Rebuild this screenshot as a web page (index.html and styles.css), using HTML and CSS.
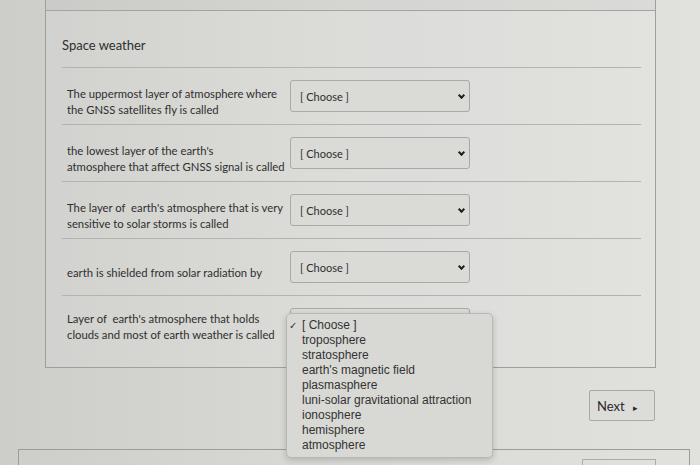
FILE: index.html
```html
<!DOCTYPE html>
<html lang="en">
<head>
  <meta charset="UTF-8" />
  <title>Quiz</title>
  <link rel="stylesheet" href="styles.css">
</head>
<body>
  <div class="page">
    <div class="card">
      <div class="card-top"></div>
      <div class="card-body">
        <div class="title">Space weather</div>

        <div class="row">
          <div class="question">The uppermost layer of atmosphere where<br>the GNSS satellites fly is called</div>
          <div class="select"><span>[ Choose ]</span><span class="chev"></span></div>
        </div>
        <div class="row">
          <div class="question">the lowest layer of the earth's<br>atmosphere that affect GNSS signal is called</div>
          <div class="select"><span>[ Choose ]</span><span class="chev"></span></div>
        </div>
        <div class="row">
          <div class="question">The layer of &nbsp;earth's atmosphere that is very<br>sensitive to solar storms is called</div>
          <div class="select"><span>[ Choose ]</span><span class="chev"></span></div>
        </div>
        <div class="row">
          <div class="question">earth is shielded from solar radiation by</div>
          <div class="select"><span>[ Choose ]</span><span class="chev"></span></div>
        </div>
        <div class="row last">
          <div class="question">Layer of &nbsp;earth's atmosphere that holds<br>clouds and most of earth weather is called</div>
          <div class="select open">
            <span class="value">[ Choose ]</span><span class="chev"></span>
            <!-- native dropdown list, opened -->
            <ul class="menu">
              <li class="checked">[ Choose ]</li>
              <li>troposphere</li>
              <li>stratosphere</li>
              <li>earth's magnetic field</li>
              <li>plasmasphere</li>
              <li>luni-solar gravitational attraction</li>
              <li>ionosphere</li>
              <li>hemisphere</li>
              <li>atmosphere</li>
            </ul>
          </div>
        </div>
      </div>
    </div>

    <div class="actions">
      <button class="next-btn">Next <span class="tri">&#9656;</span></button>
    </div>

    <div class="next-card">
      <div class="next-inner"></div>
    </div>
  </div>
</body>
</html>
```

FILE: styles.css
```css
body {
  margin: 0;
  padding: 0;
  font-family: Lato, 'Liberation Sans', sans-serif;
  color: #2f2f2f;
  background: linear-gradient(90deg, #cdcdca, #d8d8d5 45%, #e1e1de);
  overflow: hidden;
  height: 465px;
}
.page {
  width: 700px;
  height: 465px;
  overflow: hidden;
}
.card {
  margin-left: 45px;
  width: 609px;
  border-left: 1px solid #9f9f9c;
  border-right: 1px solid #9f9f9c;
  border-bottom: 1px solid #9f9f9c;
  background: rgba(255, 255, 255, 0.08);
}
.card-top {
  height: 10px;
  border-bottom: 1px solid #a3a3a0;
  background: rgba(0, 0, 0, 0.03);
}
.card-body {
  padding: 0 14px 0 16px;
}
.title {
  font-size: 13px;
  height: 30px;
  line-height: 16px;
  padding-top: 26px;
  border-bottom: 1px solid #b3b3b0;
}
.row {
  display: flex;
  align-items: center;
  padding: 12px 0 12px 5px;
  border-bottom: 1px solid #b3b3b0;
}
.row.last {
  border-bottom: none;
  align-items: flex-start;
  height: 59px;
  padding-bottom: 0;
}
.question {
  width: 223px;
  font-size: 11.3px;
  line-height: 16px;
  white-space: nowrap;
  padding-top: 6px;
  margin-bottom: -6px;
}
.row.last .question {
  padding-top: 3px;
  margin-bottom: 0;
}
.select {
  position: relative;
  width: 180px;
  height: 32px;
  box-sizing: border-box;
  border: 1px solid #a9a9a6;
  border-radius: 3px;
  background: #dadad7;
  display: flex;
  align-items: center;
  justify-content: space-between;
  padding: 0 5px 0 9px;
  font-size: 11px;
}
.select.open .value {
  visibility: hidden;
}
.chev {
  width: 3px;
  height: 3px;
  border-right: 2px solid #1e1e1e;
  border-bottom: 2px solid #1e1e1e;
  transform: rotate(45deg);
  margin-top: -2px;
}
.menu {
  position: absolute;
  left: -5px;
  top: 4px;
  width: 205px;
  margin: 0;
  padding: 4px 0 4px 0;
  list-style: none;
  background: #d8d8d5;
  border: 1px solid #b8b8b5;
  border-radius: 5px;
  box-shadow: 0 2px 6px rgba(0, 0, 0, 0.18);
  font-family: 'Liberation Sans', Arial, sans-serif;
  font-size: 12px;
  line-height: 15px;
  color: #333;
  z-index: 5;
}
.menu li {
  padding-left: 15px;
}
.menu li.checked::before {
  content: "\2713";
  display: inline-block;
  width: 13px;
  margin-left: -13px;
  font-size: 10px;
}
.actions {
  display: flex;
  justify-content: flex-end;
  width: 655px;
  padding-top: 22px;
}
.next-btn {
  width: 66px;
  height: 31px;
  border: 1px solid #a8a8a5;
  border-radius: 2px;
  background: #dcdcd9;
  font-family: Lato, 'Liberation Sans', sans-serif;
  font-size: 13px;
  color: #2a2a2a;
  padding: 0 0 0 7px;
  text-align: left;
}
.tri {
  font-size: 9px;
  margin-left: 5px;
}
.next-card {
  margin-top: 28px;
  margin-left: 18px;
  width: 670px;
  height: 30px;
  border-top: 1px solid #9c9c99;
  border-left: 1px solid #9c9c99;
  border-right: 1px solid #9c9c99;
  display: flex;
  justify-content: flex-end;
}
.next-inner {
  width: 72px;
  height: 20px;
  margin-top: 9px;
  margin-right: 33px;
  border: 1px solid #acaca9;
}
```
